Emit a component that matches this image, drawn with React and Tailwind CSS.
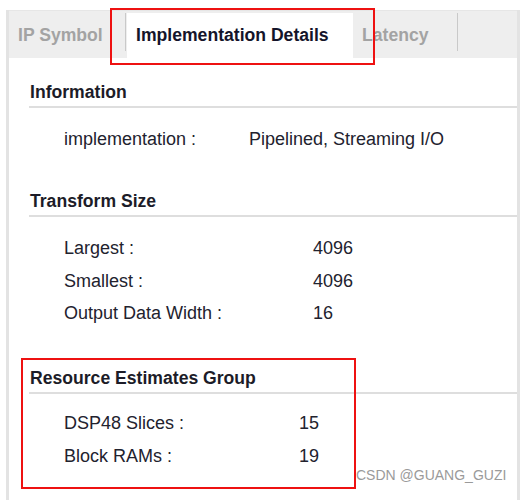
import React from 'react'

const info = [{ label: 'implementation :', value: 'Pipelined, Streaming I/O' }]

const transform = [
  { label: 'Largest :', value: '4096' },
  { label: 'Smallest :', value: '4096' },
  { label: 'Output Data Width :', value: '16' },
]

const resources = [
  { label: 'DSP48 Slices :', value: '15' },
  { label: 'Block RAMs :', value: '19' },
]

function Section({ title, rows, labelWidth, rowClass, className, rowsClass }) {
  return (
    <div className={className}>
      <div className="h-[22px] leading-[22px] pl-[1px] font-bold text-[17.6px] text-[#1c1c28]">{title}</div>
      <div className="mt-[3px] h-[2px] bg-[#dedede]"></div>
      <div className={rowsClass}>
        {rows.map((r) => (
          <div key={r.label} className={'flex pl-[35px] text-[18px] text-[#22222e] ' + rowClass}>
            <span style={{ width: labelWidth }}>{r.label}</span>
            <span>{r.value}</span>
          </div>
        ))}
      </div>
    </div>
  )
}

function App() {
  return (
    <div className="relative w-[523px] h-[500px] bg-white overflow-hidden font-['Liberation_Sans',Arial,sans-serif]">
      <div className="ml-[6px] mt-[10px] w-[514px] h-[490px] border-l-[3px] border-r-[3px] border-[#e3e3e3] flex flex-col">
        {/* tab bar */}
        <div className="h-[48px] bg-[#eeeeee] border-t border-[#e6e6e6] flex items-end">
          <div className="h-[45px] flex items-center pl-[9px] w-[116px] text-[17.6px] font-bold text-[#a3a3a3]">IP Symbol</div>
          <div className="w-[1px] h-[38px] mb-[7px] bg-[#c9c9c9]"></div>
          <div className="h-[45px] ml-[1px] w-[226px] bg-white flex items-center pl-[9px] text-[17.6px] font-bold text-[#14142a]">Implementation Details</div>
          <div className="h-[45px] flex items-center pl-[9px] w-[104px] text-[17.6px] font-bold text-[#a3a3a3]">Latency</div>
          <div className="w-[1px] h-[38px] mb-[7px] bg-[#c9c9c9]"></div>
        </div>

        {/* content */}
        <div className="flex-1 pl-[20px]">
          <Section
            title="Information"
            rows={info}
            labelWidth={185}
            rowClass="leading-[22px]"
            className="mt-[23px]"
            rowsClass="mt-[20px]"
          />
          <Section
            title="Transform Size"
            rows={transform}
            labelWidth={249}
            rowClass="leading-[32.5px]"
            className="mt-[40px]"
            rowsClass="mt-[15px]"
          />
          <Section
            title="Resource Estimates Group"
            rows={resources}
            labelWidth={235}
            rowClass="leading-[33px]"
            className="mt-[37px]"
            rowsClass="mt-[13px]"
          />
        </div>
      </div>

      {/* annotation boxes */}
      <div className="absolute left-[110px] top-[8px] w-[265px] h-[57px] border-2 border-[#ee1111]"></div>
      <div className="absolute left-[21px] top-[358px] w-[335px] h-[131px] border-2 border-[#ee1111]"></div>

      <div className="absolute left-[356px] top-[466px] text-[14px] leading-[18px] text-[#9a9a9a]">CSDN @GUANG_GUZI</div>
    </div>
  )
}

export default App
